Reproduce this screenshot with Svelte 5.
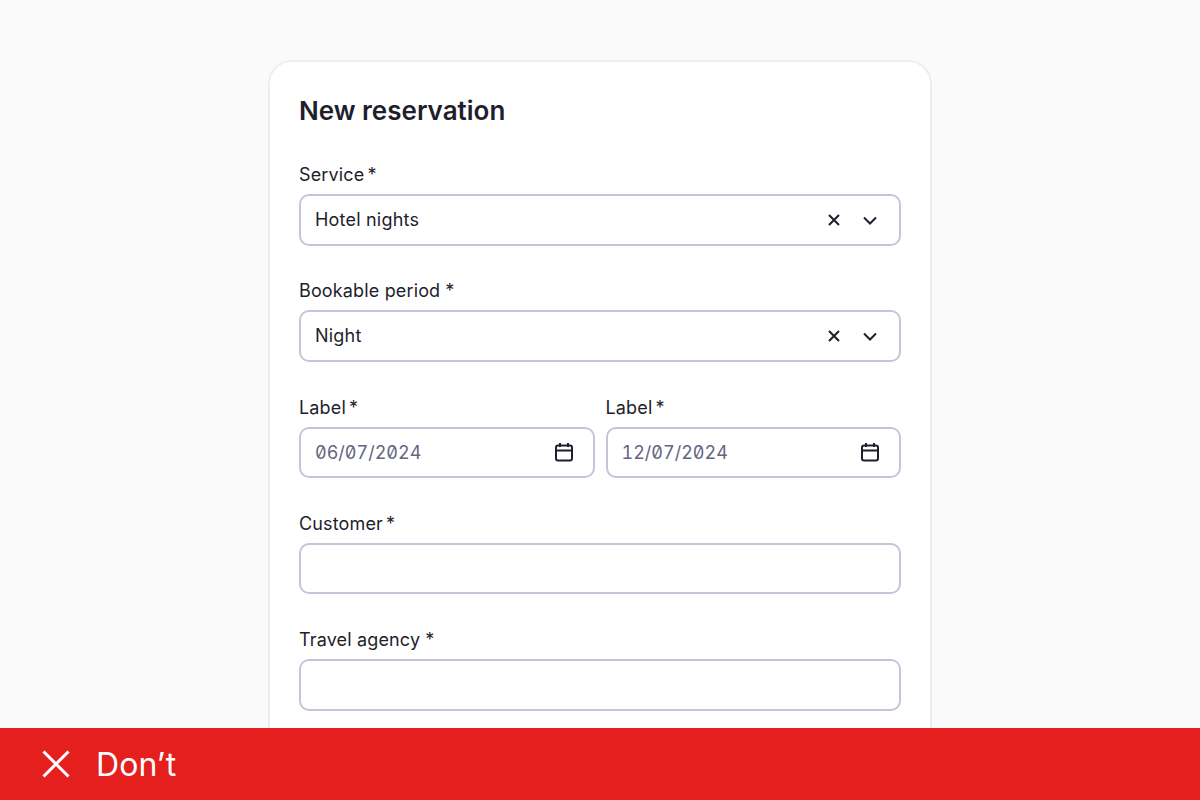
<script>
    const rows = [
        { label: "Service", tight: true, value: "Hotel nights" },
        { label: "Bookable period", tight: false, value: "Night" }
    ];
    const dates = ["06/07/2024", "12/07/2024"];
    const others = [
        { label: "Customer", tight: true },
        { label: "Travel agency", tight: false }
    ];
</script>

<div class="page">
    <main>
        <section class="card">
            <h1>New reservation</h1>

            {#each rows as row}
                <div class="field">
                    <span class="label">{row.label}<span class="star" class:tight={row.tight}>*</span></span>
                    <div class="input">
                        <span class="value">{row.value}</span>
                        <svg class="clear" width="24" height="24" viewBox="0 0 24 24" fill="none" stroke="#1e1e2c" stroke-width="2">
                            <path d="M7 7l10 10M17 7L7 17" />
                        </svg>
                        <svg width="24" height="24" viewBox="0 0 24 24" fill="none" stroke="#1e1e2c" stroke-width="2">
                            <path d="M6 9.500l6 6 6-6" />
                        </svg>
                    </div>
                </div>
            {/each}

            <div class="dates">
                {#each dates as date}
                    <div class="field">
                        <span class="label">Label<span class="star tight">*</span></span>
                        <div class="input">
                            <span class="value date">{date}</span>
                            <svg width="24" height="24" viewBox="0 0 24 24" fill="none" stroke="#1e1e2c" stroke-width="2">
                                <rect x="4" y="5.500" width="16" height="15" rx="2" />
                                <path d="M4 10.500h16M8 3v4M16 3v4" />
                            </svg>
                        </div>
                    </div>
                {/each}
            </div>

            {#each others as other}
                <div class="field">
                    <span class="label">{other.label}<span class="star" class:tight={other.tight}>*</span></span>
                    <div class="input"></div>
                </div>
            {/each}
        </section>
    </main>

    <footer>
        <svg width="32" height="32" viewBox="0 0 32 32" fill="none" stroke="#fff" stroke-width="3">
            <path d="M3.500 3.500l25 25M28.500 3.500l-25 25" />
        </svg>
        <span>Don’t</span>
    </footer>
</div>

<style>
    :global(body) {
        margin: 0;
    }
    .page {
        height: 800px;
        display: flex;
        flex-direction: column;
        background: #fafafa;
        font-family: Inter, "Noto Sans", sans-serif;
        color: #1e1e2c;
    }
    main {
        flex: 1;
        overflow: hidden;
        display: flex;
        justify-content: center;
        padding-top: 60px;
    }
    .card {
        width: 664px;
        height: 800px;
        padding: 31px 29px;
        box-sizing: border-box;
        background: #fff;
        border: 2px solid #eeeef2;
        border-radius: 24px;
    }
    h1 {
        margin: 0 0 34px;
        font-size: 26px;
        line-height: 36px;
        font-weight: 600;
    }
    .field {
        margin-bottom: 33.75px;
    }
    .label {
        display: block;
        font-size: 18px;
        line-height: 24px;
        font-weight: 400;
        letter-spacing: 0.15px;
        margin-bottom: 7px;
    }
    .star {
        margin-left: 5px;
    }
    .star.tight {
        margin-left: 3px;
    }
    .input {
        height: 51.5px;
        box-sizing: border-box;
        border: 2px solid #c5c5da;
        border-radius: 10px;
        padding: 0 17px 0 14px;
        display: flex;
        align-items: center;
        background: #fff;
    }
    .value {
        flex: 1;
        font-size: 18px;
        letter-spacing: 0.2px;
        padding-bottom: 1px;
    }
    .date {
        font-variant-numeric: tabular-nums slashed-zero;
        letter-spacing: 0;
        padding-bottom: 0;
        color: #65657f;
    }
    .clear {
        margin-right: 12px;
    }
    .dates {
        display: grid;
        grid-template-columns: 1fr 1fr;
        gap: 11px;
    }
    footer {
        height: 72px;
        flex: none;
        background: #e51e1e;
        color: #fff;
        display: flex;
        align-items: center;
        gap: 24px;
        padding-left: 40px;
        font-size: 32px;
        letter-spacing: 0.1px;
    }
</style>
